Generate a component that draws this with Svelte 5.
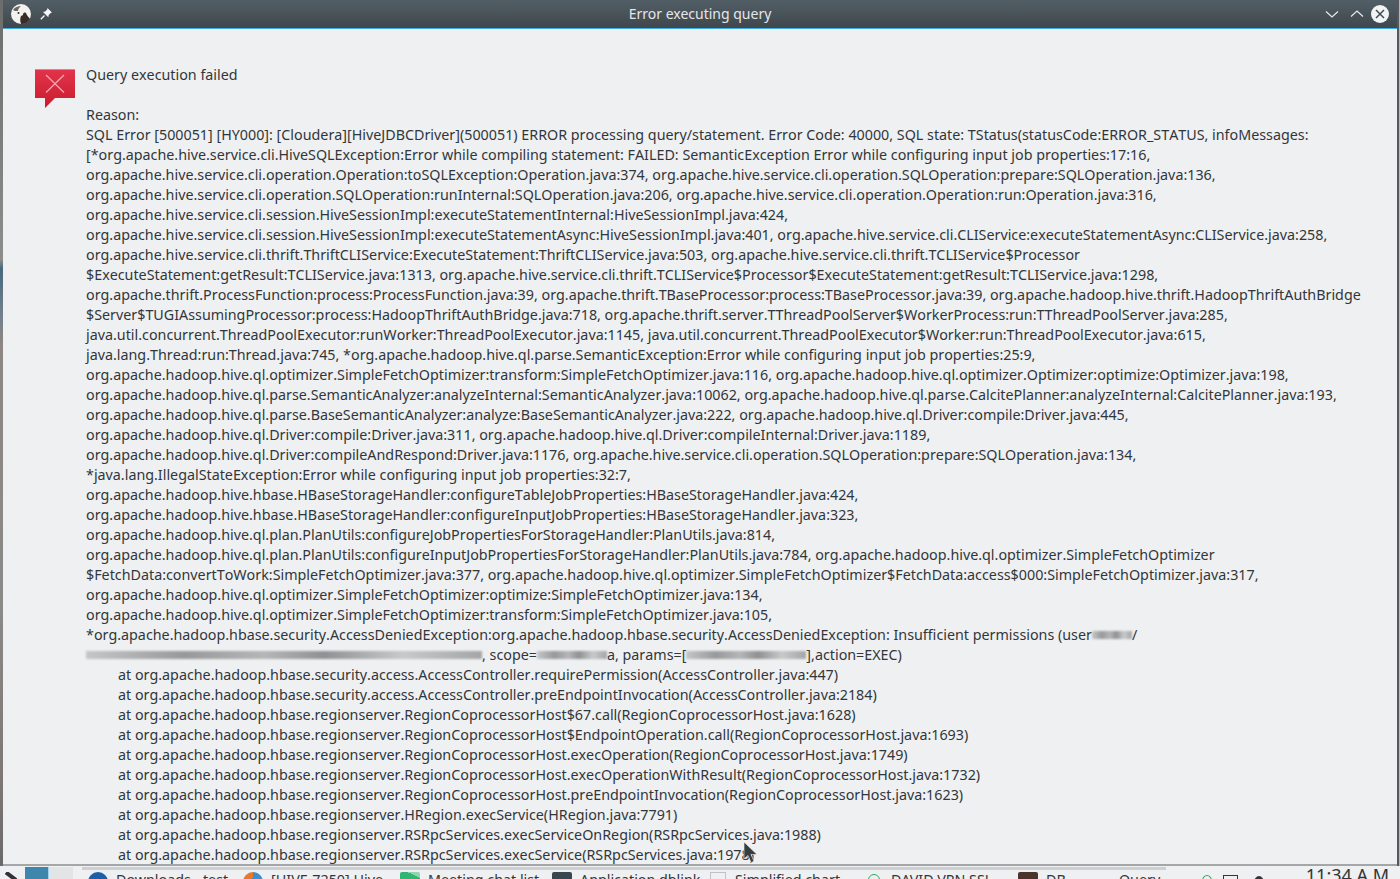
<script>
	const head = ['Query execution failed', '', 'Reason:'];

	const lines = [
		'SQL Error [500051] [HY000]: [Cloudera][HiveJDBCDriver](500051) ERROR processing query/statement. Error Code: 40000, SQL state: TStatus(statusCode:ERROR_STATUS, infoMessages:',
		'[*org.apache.hive.service.cli.HiveSQLException:Error while compiling statement: FAILED: SemanticException Error while configuring input job properties:17:16,',
		'org.apache.hive.service.cli.operation.Operation:toSQLException:Operation.java:374, org.apache.hive.service.cli.operation.SQLOperation:prepare:SQLOperation.java:136,',
		'org.apache.hive.service.cli.operation.SQLOperation:runInternal:SQLOperation.java:206, org.apache.hive.service.cli.operation.Operation:run:Operation.java:316,',
		'org.apache.hive.service.cli.session.HiveSessionImpl:executeStatementInternal:HiveSessionImpl.java:424,',
		'org.apache.hive.service.cli.session.HiveSessionImpl:executeStatementAsync:HiveSessionImpl.java:401, org.apache.hive.service.cli.CLIService:executeStatementAsync:CLIService.java:258,',
		'org.apache.hive.service.cli.thrift.ThriftCLIService:ExecuteStatement:ThriftCLIService.java:503, org.apache.hive.service.cli.thrift.TCLIService$Processor',
		'$ExecuteStatement:getResult:TCLIService.java:1313, org.apache.hive.service.cli.thrift.TCLIService$Processor$ExecuteStatement:getResult:TCLIService.java:1298,',
		'org.apache.thrift.ProcessFunction:process:ProcessFunction.java:39, org.apache.thrift.TBaseProcessor:process:TBaseProcessor.java:39, org.apache.hadoop.hive.thrift.HadoopThriftAuthBridge',
		'$Server$TUGIAssumingProcessor:process:HadoopThriftAuthBridge.java:718, org.apache.thrift.server.TThreadPoolServer$WorkerProcess:run:TThreadPoolServer.java:285,',
		'java.util.concurrent.ThreadPoolExecutor:runWorker:ThreadPoolExecutor.java:1145, java.util.concurrent.ThreadPoolExecutor$Worker:run:ThreadPoolExecutor.java:615,',
		'java.lang.Thread:run:Thread.java:745, *org.apache.hadoop.hive.ql.parse.SemanticException:Error while configuring input job properties:25:9,',
		'org.apache.hadoop.hive.ql.optimizer.SimpleFetchOptimizer:transform:SimpleFetchOptimizer.java:116, org.apache.hadoop.hive.ql.optimizer.Optimizer:optimize:Optimizer.java:198,',
		'org.apache.hadoop.hive.ql.parse.SemanticAnalyzer:analyzeInternal:SemanticAnalyzer.java:10062, org.apache.hadoop.hive.ql.parse.CalcitePlanner:analyzeInternal:CalcitePlanner.java:193,',
		'org.apache.hadoop.hive.ql.parse.BaseSemanticAnalyzer:analyze:BaseSemanticAnalyzer.java:222, org.apache.hadoop.hive.ql.Driver:compile:Driver.java:445,',
		'org.apache.hadoop.hive.ql.Driver:compile:Driver.java:311, org.apache.hadoop.hive.ql.Driver:compileInternal:Driver.java:1189,',
		'org.apache.hadoop.hive.ql.Driver:compileAndRespond:Driver.java:1176, org.apache.hive.service.cli.operation.SQLOperation:prepare:SQLOperation.java:134,',
		'*java.lang.IllegalStateException:Error while configuring input job properties:32:7,',
		'org.apache.hadoop.hive.hbase.HBaseStorageHandler:configureTableJobProperties:HBaseStorageHandler.java:424,',
		'org.apache.hadoop.hive.hbase.HBaseStorageHandler:configureInputJobProperties:HBaseStorageHandler.java:323,',
		'org.apache.hadoop.hive.ql.plan.PlanUtils:configureJobPropertiesForStorageHandler:PlanUtils.java:814,',
		'org.apache.hadoop.hive.ql.plan.PlanUtils:configureInputJobPropertiesForStorageHandler:PlanUtils.java:784, org.apache.hadoop.hive.ql.optimizer.SimpleFetchOptimizer',
		'$FetchData:convertToWork:SimpleFetchOptimizer.java:377, org.apache.hadoop.hive.ql.optimizer.SimpleFetchOptimizer$FetchData:access$000:SimpleFetchOptimizer.java:317,',
		'org.apache.hadoop.hive.ql.optimizer.SimpleFetchOptimizer:optimize:SimpleFetchOptimizer.java:134,',
		'org.apache.hadoop.hive.ql.optimizer.SimpleFetchOptimizer:transform:SimpleFetchOptimizer.java:105,'
	];

	const stack = [
		'at org.apache.hadoop.hbase.security.access.AccessController.requirePermission(AccessController.java:447)',
		'at org.apache.hadoop.hbase.security.access.AccessController.preEndpointInvocation(AccessController.java:2184)',
		'at org.apache.hadoop.hbase.regionserver.RegionCoprocessorHost$67.call(RegionCoprocessorHost.java:1628)',
		'at org.apache.hadoop.hbase.regionserver.RegionCoprocessorHost$EndpointOperation.call(RegionCoprocessorHost.java:1693)',
		'at org.apache.hadoop.hbase.regionserver.RegionCoprocessorHost.execOperation(RegionCoprocessorHost.java:1749)',
		'at org.apache.hadoop.hbase.regionserver.RegionCoprocessorHost.execOperationWithResult(RegionCoprocessorHost.java:1732)',
		'at org.apache.hadoop.hbase.regionserver.RegionCoprocessorHost.preEndpointInvocation(RegionCoprocessorHost.java:1623)',
		'at org.apache.hadoop.hbase.regionserver.HRegion.execService(HRegion.java:7791)',
		'at org.apache.hadoop.hbase.regionserver.RSRpcServices.execServiceOnRegion(RSRpcServices.java:1988)',
		'at org.apache.hadoop.hbase.regionserver.RSRpcServices.execService(RSRpcServices.java:1978)'
	];

	const tasks = [
		{ label: 'Downloads - test', kind: 'globe', width: 155 },
		{ label: '[HIVE-7250] Hive', kind: 'firefox', width: 157 },
		{ label: 'Meeting chat list', kind: 'green', width: 152 },
		{ label: 'Application dblink', kind: 'dark', width: 158 },
		{ label: 'Simplified chart', kind: 'doc', width: 158 },
		{ label: 'DAVID VPN SSL', kind: 'ring', width: 150 }
	];
</script>

<div class="screen">
	<div class="middle">
		<div class="desktop-left"></div>
		<div class="window">
			<header class="titlebar">
				<div class="title-left">
					<svg width="20" height="20" viewBox="0 0 20 20">
						<circle cx="10" cy="10" r="10" fill="#f4f2ee" />
						<path d="M10 20c4 0 7-2 9-5-1-2-3-3-4-6-2-1-3 0-3 2l-2 1c-1 2-1 5 0 8z" fill="#3a2c26" />
						<path d="M2 6c2-3 5-4 8-4-2 2-3 3-3 5-2 0-4 0-5-1z" fill="#6a6560" />
						<circle cx="7.5" cy="9" r="1" fill="#2b2b2b" />
					</svg>
					<svg class="pin" width="12" height="12" viewBox="0 0 12 12">
						<path d="M7.5 0L12 4.5l-1.3.5-2 2-.4 2.2L3 4l2.2-.4 2-2z" fill="#f5f6f7" />
						<path d="M4.5 7.5L.8 11.2" stroke="#f5f6f7" stroke-width="1.3" />
					</svg>
				</div>
				<div class="title">Error executing query</div>
				<div class="title-right">
					<svg width="14" height="14" viewBox="0 0 14 14"><path d="M1 4.5l6 5.5 6-5.5" class="chev" /></svg>
					<svg width="14" height="14" viewBox="0 0 14 14"><path d="M1 9.5L7 4l6 5.5" class="chev" /></svg>
					<svg class="close" width="18" height="18" viewBox="0 0 18 18">
						<circle cx="9" cy="9" r="9" fill="#f2f3f4" />
						<path d="M5 5l8 8M13 5l-8 8" stroke="#3f4a52" stroke-width="1.5" />
					</svg>
				</div>
			</header>
			<div class="body">
				<svg class="error-icon" width="40" height="40" viewBox="0 0 40 40">
					<defs>
						<linearGradient id="bubble" x1="0" y1="0" x2="0" y2="1">
							<stop offset="0" stop-color="#e2334c" />
							<stop offset="1" stop-color="#c91c2c" />
						</linearGradient>
					</defs>
					<path d="M0 0h40v29H20L10 39V29H0z" fill="url(#bubble)" />
					<path d="M0 .5h40" stroke="#ee7d8c" />
					<path d="M11 6l18 17.5M29 6L11 23.5" stroke="#f5a6ae" stroke-width="1.3" />
				</svg>
				<div class="message">
					{#each head as line}
						<div class="line">{line}</div>
					{/each}
					{#each lines as line}
						<div class="line">{line}</div>
					{/each}
					<div class="line">*org.apache.hadoop.hbase.security.AccessDeniedException:org.apache.hadoop.hbase.security.AccessDeniedException: Insufficient permissions (user<span class="smudge user"></span>/</div>
					<div class="line"><span class="smudge host"></span>, scope=<span class="smudge scope"></span>a, params=[<span class="smudge params"></span>],action=EXEC)</div>
					{#each stack as line}
						<div class="line indent">{line}</div>
					{/each}
				</div>
				<svg class="cursor" width="16" height="22" viewBox="0 0 16 22">
					<path d="M1 0v17l4-3.5 3 7 3-1.2-3-6.8h6z" fill="#3a3d40" stroke="#f4f4f4" stroke-width=".6" />
				</svg>
			</div>
		</div>
		<div class="desktop-right"></div>
	</div>

	<footer class="taskbar">
		<div class="scrollbar"></div>
		<div class="task-row">
			<svg class="launcher" width="12" height="12" viewBox="0 0 12 12"><path d="M1 0.5l10 7.5" stroke="#2f3336" stroke-width="4" /></svg>
			<div class="pager active"></div>
			<div class="pager"></div>
			<div class="tasks">
				{#each tasks as task}
					<div class="task" style="width: {task.width}px">
						<span class="task-icon {task.kind}"></span>
						<span class="task-label">{task.label}</span>
					</div>
				{/each}
				<div class="task">
					<span class="task-icon brown"></span>
					<span class="task-label">DB ...</span>
					<span class="task-label second">Query</span>
				</div>
			</div>
			<div class="tray">
				<span class="tray-dot"></span>
				<span class="tray-box"></span>
				<span class="tray-vol"></span>
				<span class="clock">11:34 A M</span>
			</div>
		</div>
	</footer>
</div>

<style>
	:global(body) {
		margin: 0;
		overflow: hidden;
		background: #eff0f1;
	}

	.screen {
		width: 1400px;
		height: 879px;
		display: flex;
		flex-direction: column;
		overflow: hidden;
		font-family: 'Noto Sans', 'Open Sans', sans-serif;
		color: #31363b;
	}

	.middle {
		display: flex;
		height: 866px;
		flex: none;
	}

	.desktop-left {
		width: 3px;
		background: linear-gradient(#6c6c6a, #8d8d8b 30%, #47697f 31%, #6f7f8a 36%, #8e8683 40%, #8a8a88 70%, #7f7675 90%, #6a6a6a);
	}

	.desktop-right {
		width: 3px;
		background: linear-gradient(90deg, #54595d 2px, #b5b7b9 2px);
	}

	.window {
		flex: 1;
		display: flex;
		flex-direction: column;
		min-width: 0;
		background: #eff0f1;
		border-bottom: 2px solid #a4a6a8;
	}

	.titlebar {
		height: 28px;
		flex: none;
		position: relative;
		display: flex;
		align-items: center;
		justify-content: space-between;
		background: linear-gradient(#525e66, #3f474d);
		border-bottom: 1px solid #3daee9;
		color: #e4e7e9;
		padding: 0 8px;
	}

	.title-left {
		display: flex;
		align-items: center;
		gap: 9px;
	}

	.title {
		font-size: 14px;
		position: absolute;
		left: 0;
		right: 0;
		padding-bottom: 2px;
		text-align: center;
	}

	.title-right {
		display: flex;
		align-items: center;
		gap: 11px;
		position: relative;
	}

	.close {
		margin-left: -4px;
	}

	.chev {
		fill: none;
		stroke: #e8eaec;
		stroke-width: 1.2;
	}

	.body {
		flex: 1;
		min-height: 0;
		position: relative;
		display: flex;
		gap: 11px;
		padding: 36px 0 0 32px;
		overflow: hidden;
	}

	.error-icon {
		flex: none;
		margin-top: 4px;
	}

	.message {
		font-size: 14.3px;
		line-height: 20px;
		font-kerning: none;
		color: #31363b;
	}

	.line {
		height: 20px;
		white-space: pre;
	}

	.indent {
		padding-left: 32px;
	}

	.smudge {
		display: inline-block;
		height: 8px;
		vertical-align: 1px;
		background: linear-gradient(90deg, #c4c6c8, #97999b 25%, #b4b6b8 45%, #8f9193 60%, #c7c9ca 80%, #a3a5a7);
		filter: blur(1px);
	}

	.user {
		width: 40px;
	}

	.host {
		width: 396px;
	}

	.scope {
		width: 70px;
	}

	.params {
		width: 120px;
	}

	.cursor {
		position: absolute;
		left: 740px;
		top: 813px;
	}

	.taskbar {
		flex: 1;
		background: #eff0f1;
		position: relative;
		overflow: hidden;
	}

	.scrollbar {
		position: absolute;
		left: 82px;
		top: 1px;
		width: 1084px;
		height: 3px;
		background: #cdd0d2;
	}

	.task-row {
		display: flex;
		align-items: flex-start;
		height: 40px;
	}

	.launcher {
		margin: 6px 8px 0 5px;
		flex: none;
	}

	.pager {
		width: 24px;
		height: 40px;
		margin-top: 1px;
		background: #e3e4e5;
		flex: none;
	}

	.pager.active {
		background: #3f86ad;
		border-right: 1px solid #9fd3ef;
		width: 23px;
	}

	.tasks {
		display: flex;
		margin-left: 15px;
		padding-top: 4px;
		flex: 1;
	}

	.task {
		display: flex;
		align-items: flex-start;
		gap: 8px;
		flex: none;
		font-size: 14.3px;
		line-height: 20px;
	}

	.task-icon {
		width: 20px;
		height: 20px;
		margin-top: 2px;
		border-radius: 2px;
		flex: none;
	}

	.globe {
		border-radius: 50%;
		background: #1d5fa8;
	}

	.firefox {
		border-radius: 50%;
		background: linear-gradient(100deg, #e8792b 45%, #3b8fd0 45%);
	}

	.green {
		background: linear-gradient(205deg, #8fd6ae 20%, #2fb673 20%);
	}

	.dark {
		background: #37474f;
	}

	.brown {
		background: #4a342c;
	}

	.doc {
		width: 14px;
		height: 18px;
		border: 1px solid #bcc3c8;
		background: #eef1f3;
		margin-right: 1px;
		border-radius: 0;
	}

	.ring {
		width: 10px;
		height: 10px;
		margin: 4px 3px 0 0;
		border: 1.5px solid #27ae60;
		border-radius: 50%;
	}

	.task-label {
		white-space: nowrap;
	}

	.second {
		margin-left: 30px;
	}

	.tray {
		display: flex;
		align-items: flex-start;
		flex: none;
		width: 200px;
		position: relative;
	}

	.tray-dot {
		width: 8px;
		height: 10px;
		border: 1.5px solid #27ae60;
		border-radius: 50%;
		margin: 9px 0 0 2px;
	}

	.tray-box {
		width: 13px;
		height: 14px;
		border: 1.5px solid #31363b;
		margin: 9px 0 0 11px;
	}

	.tray-vol {
		width: 10px;
		height: 14px;
		background: #31363b;
		border-radius: 50%;
		margin: 10px 0 0 16px;
	}

	.clock {
		font-size: 18px;
		line-height: 22px;
		position: absolute;
		right: 11px;
		top: -2px;
		white-space: nowrap;
	}
</style>
